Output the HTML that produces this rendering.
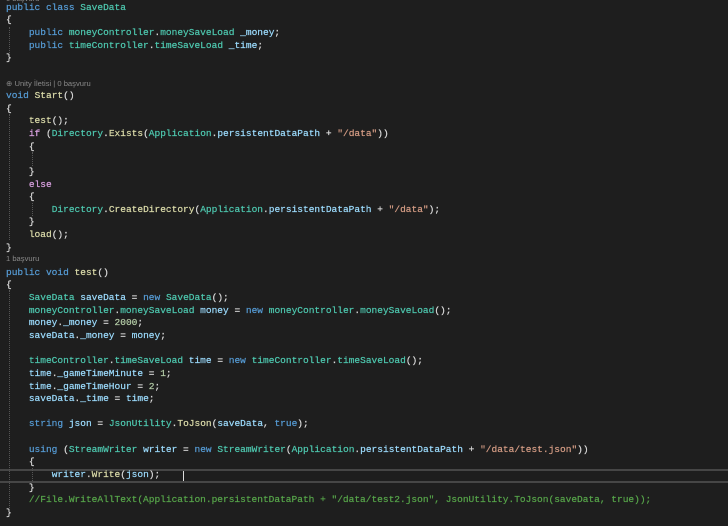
<!DOCTYPE html>
<html><head><meta charset="utf-8"><style>
body{margin:0;width:728px;height:526px;background:#1e1e1e;overflow:hidden;position:relative;font-family:"Liberation Mono",monospace;font-size:9.53px;color:#dcdcdc}
.l{position:absolute;left:6px;height:12.6px;line-height:12.6px;white-space:pre;-webkit-text-stroke:0.2px currentColor}
.k{color:#569cd6}.c{color:#d8a0df}.t{color:#4ec9b0}.m{color:#dcdcaa}.v{color:#9cdcfe}.s{color:#d69d85}.g{color:#57a64a}.n{color:#b5cea8}
.lens{position:absolute;left:6px;font-family:"Liberation Sans",sans-serif;font-size:7.6px;color:#8a8a8a;white-space:pre}
.gd{position:absolute;width:0;border-left:1px dotted #555}
.hl{position:absolute;left:0;width:728px;top:469px;height:10px;border-top:2px solid #464646;border-bottom:2px solid #464646}
</style></head><body>
<div class="lens" style="top:-6px">0 başvuru</div>
<div class="hl"></div>
<div style="position:absolute;left:183px;top:471px;width:1px;height:10px;background:#dcdcdc"></div>
<div class="gd" style="left:9px;top:27px;height:26px"></div>
<div class="gd" style="left:9px;top:114px;height:126px"></div>
<div class="gd" style="left:32px;top:152px;height:14px"></div>
<div class="gd" style="left:32px;top:203px;height:13px"></div>
<div class="gd" style="left:9px;top:290px;height:218px"></div>
<div class="gd" style="left:32px;top:468px;height:13px"></div>
<div class="l" style="top:1.7px"><span class="k">public class</span> <span class="t">SaveData</span></div>
<div class="l" style="top:14.3px">{</div>
<div class="l" style="top:26.95px">    <span class="k">public</span> <span class="t">moneyController</span>.<span class="t">moneySaveLoad</span> <span class="v">_money</span>;</div>
<div class="l" style="top:39.6px">    <span class="k">public</span> <span class="t">timeController</span>.<span class="t">timeSaveLoad</span> <span class="v">_time</span>;</div>
<div class="l" style="top:52.2px">}</div>
<div class="lens" style="top:79px">⊕ Unity İletisi | 0 başvuru</div>
<div class="l" style="top:90.1px"><span class="k">void</span> <span class="m">Start</span>()</div>
<div class="l" style="top:102.7px">{</div>
<div class="l" style="top:115.35px">    <span class="m">test</span>();</div>
<div class="l" style="top:128px">    <span class="c">if</span> (<span class="t">Directory</span>.<span class="m">Exists</span>(<span class="t">Application</span>.<span class="v">persistentDataPath</span> + <span class="s">"/data"</span>))</div>
<div class="l" style="top:140.6px">    {</div>
<div class="l" style="top:165.9px">    }</div>
<div class="l" style="top:178.5px">    <span class="c">else</span></div>
<div class="l" style="top:191.1px">    {</div>
<div class="l" style="top:203.7px">        <span class="t">Directory</span>.<span class="m">CreateDirectory</span>(<span class="t">Application</span>.<span class="v">persistentDataPath</span> + <span class="s">"/data"</span>);</div>
<div class="l" style="top:216.3px">    }</div>
<div class="l" style="top:229px">    <span class="m">load</span>();</div>
<div class="l" style="top:241.6px">}</div>
<div class="lens" style="top:254px">1 başvuru</div>
<div class="l" style="top:266.8px"><span class="k">public void</span> <span class="m">test</span>()</div>
<div class="l" style="top:279.45px">{</div>
<div class="l" style="top:292.1px">    <span class="t">SaveData</span> <span class="v">saveData</span> = <span class="k">new</span> <span class="t">SaveData</span>();</div>
<div class="l" style="top:304.7px">    <span class="t">moneyController</span>.<span class="t">moneySaveLoad</span> <span class="v">money</span> = <span class="k">new</span> <span class="t">moneyController</span>.<span class="t">moneySaveLoad</span>();</div>
<div class="l" style="top:317.3px">    <span class="v">money</span>.<span class="v">_money</span> = <span class="n">2000</span>;</div>
<div class="l" style="top:330px">    <span class="v">saveData</span>.<span class="v">_money</span> = <span class="v">money</span>;</div>
<div class="l" style="top:355.2px">    <span class="t">timeController</span>.<span class="t">timeSaveLoad</span> <span class="v">time</span> = <span class="k">new</span> <span class="t">timeController</span>.<span class="t">timeSaveLoad</span>();</div>
<div class="l" style="top:367.8px">    <span class="v">time</span>.<span class="v">_gameTimeMinute</span> = <span class="n">1</span>;</div>
<div class="l" style="top:380.5px">    <span class="v">time</span>.<span class="v">_gameTimeHour</span> = <span class="n">2</span>;</div>
<div class="l" style="top:393.1px">    <span class="v">saveData</span>.<span class="v">_time</span> = <span class="v">time</span>;</div>
<div class="l" style="top:418.4px">    <span class="k">string</span> <span class="v">json</span> = <span class="t">JsonUtility</span>.<span class="m">ToJson</span>(<span class="v">saveData</span>, <span class="k">true</span>);</div>
<div class="l" style="top:443.6px">    <span class="k">using</span> (<span class="t">StreamWriter</span> <span class="v">writer</span> = <span class="k">new</span> <span class="t">StreamWriter</span>(<span class="t">Application</span>.<span class="v">persistentDataPath</span> + <span class="s">"/data/test.json"</span>))</div>
<div class="l" style="top:456.2px">    {</div>
<div class="l" style="top:468.8px">        <span class="v">writer</span>.<span class="m">Write</span>(<span class="v">json</span>);</div>
<div class="l" style="top:481.5px">    }</div>
<div class="l" style="top:494.1px">    <span class="g">//File.WriteAllText(Application.persistentDataPath + "/data/test2.json", JsonUtility.ToJson(saveData, true));</span></div>
<div class="l" style="top:506.7px">}</div>
</body></html>
